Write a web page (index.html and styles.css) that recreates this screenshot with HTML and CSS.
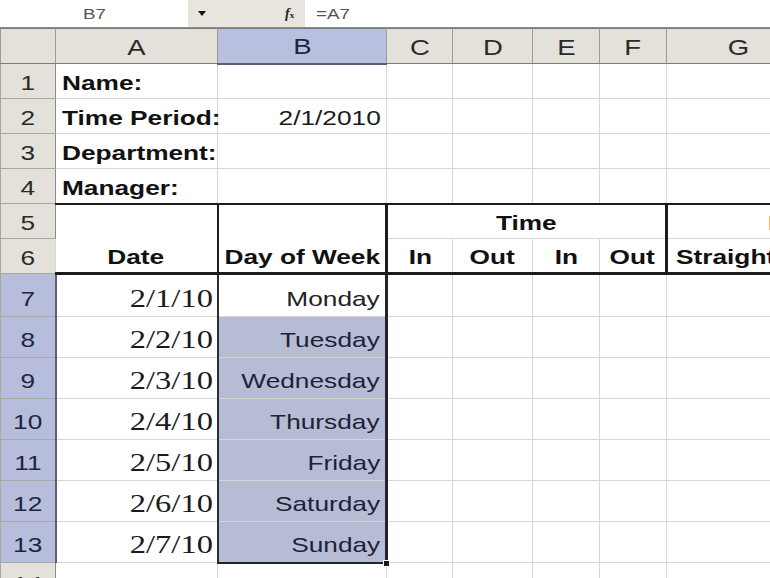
FILE: index.html
```html
<!DOCTYPE html>
<html>
<head>
<meta charset="utf-8">
<link rel="stylesheet" href="styles.css">
</head>
<body>
<div class="app">
  <div class="fbar">
    <div class="namebox"><span class="sx l">B7</span></div>
    <div class="fbtns">
      <span class="drop"></span>
      <span class="fx"><i>f</i><small>x</small></span>
    </div>
    <div class="formula"><span class="sx l">=A7</span></div>
  </div>
  <div class="sheet">
    <table class="grid">
      <colgroup>
        <col class="w-rh"><col class="w-a"><col class="w-b"><col class="w-c"><col class="w-d"><col class="w-e"><col class="w-f"><col class="w-g">
      </colgroup>
      <tr class="hdr">
        <th class="corner"></th>
        <th><span class="sx c">A</span></th>
        <th class="selh"><span class="sx c">B</span></th>
        <th><span class="sx c">C</span></th>
        <th><span class="sx c">D</span></th>
        <th><span class="sx c">E</span></th>
        <th><span class="sx c">F</span></th>
        <th><span class="sx c">G</span></th>
      </tr>
      <tr class="r">
        <th class="rh"><span class="sx c">1</span></th>
        <td class="lbl"><span class="sx l">Name:</span></td>
        <td></td><td></td><td></td><td></td><td></td><td></td>
      </tr>
      <tr class="r">
        <th class="rh"><span class="sx c">2</span></th>
        <td class="lbl"><span class="sx l">Time Period:</span></td>
        <td class="num"><span class="sx r">2/1/2010</span></td>
        <td></td><td></td><td></td><td></td><td></td>
      </tr>
      <tr class="r">
        <th class="rh"><span class="sx c">3</span></th>
        <td class="lbl"><span class="sx l">Department:</span></td>
        <td></td><td></td><td></td><td></td><td></td><td></td>
      </tr>
      <tr class="r">
        <th class="rh"><span class="sx c">4</span></th>
        <td class="lbl"><span class="sx l">Manager:</span></td>
        <td></td><td></td><td></td><td></td><td></td><td></td>
      </tr>
      <tr class="r">
        <th class="rh"><span class="sx c">5</span></th>
        <td rowspan="2" class="hd top bot"><span class="sx c">Date</span></td>
        <td rowspan="2" class="hd top bot lft rgt"><span class="sx c">Day of Week</span></td>
        <td colspan="4" class="hd top rgt"><span class="sx c">Time</span></td>
        <td class="hd top gh"><span class="sx l">Hours</span></td>
      </tr>
      <tr class="r">
        <th class="rh"><span class="sx c">6</span></th>
        <td class="hd bot"><span class="sx c">In</span></td>
        <td class="hd bot"><span class="sx c">Out</span></td>
        <td class="hd bot"><span class="sx c">In</span></td>
        <td class="hd bot rgt"><span class="sx c">Out</span></td>
        <td class="hd bot gs"><span class="sx l">Straight Time</span></td>
      </tr>
      <tr class="r big first">
        <th class="rh selr"><span class="sx c">7</span></th>
        <td class="date"><span class="sx2 r">2/1/10</span></td>
        <td class="day sel active"><span class="sx r">Monday</span></td>
        <td></td><td></td><td></td><td></td><td></td>
      </tr>
      <tr class="r big">
        <th class="rh selr"><span class="sx c">8</span></th>
        <td class="date"><span class="sx2 r">2/2/10</span></td>
        <td class="day sel fill"><span class="sx r">Tuesday</span></td>
        <td></td><td></td><td></td><td></td><td></td>
      </tr>
      <tr class="r big">
        <th class="rh selr"><span class="sx c">9</span></th>
        <td class="date"><span class="sx2 r">2/3/10</span></td>
        <td class="day sel fill"><span class="sx r">Wednesday</span></td>
        <td></td><td></td><td></td><td></td><td></td>
      </tr>
      <tr class="r big">
        <th class="rh selr"><span class="sx c">10</span></th>
        <td class="date"><span class="sx2 r">2/4/10</span></td>
        <td class="day sel fill"><span class="sx r">Thursday</span></td>
        <td></td><td></td><td></td><td></td><td></td>
      </tr>
      <tr class="r big">
        <th class="rh selr"><span class="sx c">11</span></th>
        <td class="date"><span class="sx2 r">2/5/10</span></td>
        <td class="day sel fill"><span class="sx r">Friday</span></td>
        <td></td><td></td><td></td><td></td><td></td>
      </tr>
      <tr class="r big">
        <th class="rh selr"><span class="sx c">12</span></th>
        <td class="date"><span class="sx2 r">2/6/10</span></td>
        <td class="day sel fill"><span class="sx r">Saturday</span></td>
        <td></td><td></td><td></td><td></td><td></td>
      </tr>
      <tr class="r big">
        <th class="rh selr"><span class="sx c">13</span></th>
        <td class="date"><span class="sx2 r">2/7/10</span></td>
        <td class="day sel fill last"><span class="sx r">Sunday</span><span class="handle"></span></td>
        <td></td><td></td><td></td><td></td><td></td>
      </tr>
      <tr class="r big">
        <th class="rh rh14"><span class="sx c">14</span></th>
        <td></td><td></td><td></td><td></td><td></td><td></td><td></td>
      </tr>
    </table>
  </div>
</div>
</body>
</html>
```

FILE: styles.css
```css
* { box-sizing: border-box; }
html, body { margin: 0; padding: 0; background: #fff; }
body { font-family: "Liberation Sans", Arial, sans-serif; color: #111; }

.app { width: 770px; height: 578px; overflow: hidden; background: #fff; }

.sx, .sx2 { display: inline-block; transform: scaleX(1.25); white-space: nowrap; }
.sx2 { transform: scaleX(1.3); }
.sx.l, .sx2.l { transform-origin: left center; }
.sx.r, .sx2.r { transform-origin: right center; }
.sx.c, .sx2.c { transform-origin: center center; }

/* formula bar */
.fbar { height: 28px; display: flex; align-items: stretch; background: #fff; border-bottom: 1px solid #8c8c88; font-size: 15px; color: #555; }
.namebox { width: 188px; padding: 5px 0 0 83px; }
.fbtns { width: 117px; background: #e7e5de; display: flex; align-items: center; }
.drop { width: 0; height: 0; border-left: 4px solid transparent; border-right: 4px solid transparent; border-top: 5px solid #111; margin-left: 10px; }
.fx { margin-left: 79px; font-family: "Liberation Serif", serif; font-weight: bold; color: #222; font-size: 14px; line-height: 1; }
.fx small { font-size: 9px; }
.formula { padding: 5px 0 0 11px; }

/* sheet */
.sheet { width: 770px; overflow: hidden; }
.grid { border-collapse: collapse; table-layout: fixed; width: 810px; }
.w-rh { width: 55px; }
.w-a { width: 162px; }
.w-b { width: 169px; }
.w-c { width: 66px; }
.w-d { width: 80px; }
.w-e { width: 67px; }
.w-f { width: 67px; }
.w-g { width: 144px; }

.grid th, .grid td { padding: 0; white-space: nowrap; overflow: visible; }

.hdr th { height: 35px; background: #e3e1da; border: 1px solid #9c9b96; border-top: 1px solid #7a7a76; border-bottom: 1px solid #7e7d78; font-weight: normal; font-size: 22px; color: #2a2a2a; text-align: center; vertical-align: middle; padding-top: 3px; line-height: 22px; }
.hdr th.selh { background: #b8c0df; color: #1f2540; border-bottom: 2px solid #5a5f78; }

.r th.rh { background: #e3e1da; border: 1px solid #a8a7a2; border-right: 1px solid #8a8985; font-weight: normal; font-size: 21px; color: #2a2a2a; text-align: center; vertical-align: bottom; line-height: 21px; padding-bottom: 5px; }
.r th.selr { background: #b6bedb; color: #1f2540; border-right: 2px solid #5a5f78; }
.r th.rh14 { vertical-align: top; padding-top: 10px; }

.r td { height: 35px; border: 1px solid #d6d6d6; font-size: 21px; line-height: 21px; vertical-align: bottom; padding-bottom: 5px; }
.r.big td, .r.big th.rh { height: 41px; padding-bottom: 7px; }
.r.big.first td, .r.big.first th.rh { height: 43px; }

.r td.lbl { font-weight: bold; padding-left: 6px; text-align: left; color: #111; }
.r td.num { text-align: right; padding-right: 5px; color: #1a1a1a; }

.r td.hd { font-weight: bold; text-align: center; color: #111; }
.r td.top { border-top: 2px solid #1c1c1c; }
.r td.bot { border-bottom: 3px solid #1c1c1c; }
.r td.lft { border-left: 2px solid #1c1c1c; }
.r td.rgt { border-right: 3px solid #1c1c1c; }
.r td.gh { text-align: left; padding-left: 100px; }
.r td.gs { text-align: left; padding-left: 8px; }

.r td.date { text-align: right; padding-right: 4px; font-family: "Liberation Serif", "Times New Roman", serif; font-size: 25px; line-height: 25px; padding-bottom: 5px; color: #1a1a1a; }

.r td.day { text-align: right; padding-right: 5px; color: #222; position: relative; }
.r td.sel { border-left: 2px solid #2a2c36; border-right: 3px solid #23252e; }
.r td.fill { background: #b7bcd5; color: #1d2238; }
.r td.active { background: #fff; }
.r td.last { border-bottom: 2px solid #23252e; }
.handle { position: absolute; right: -5px; bottom: -5px; width: 7px; height: 7px; background: #1c1c1c; border: 1px solid #fff; }
```
